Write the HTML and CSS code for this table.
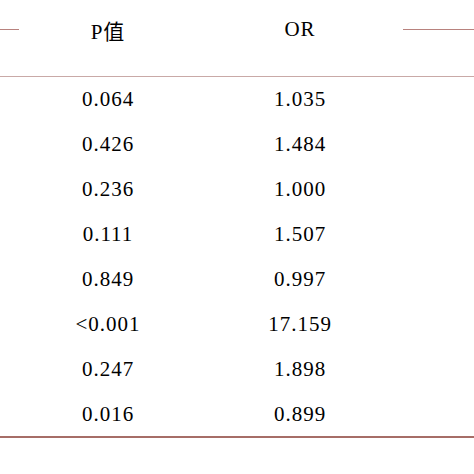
FILE: index.html
```html
<!DOCTYPE html>
<html lang="zh">
<head>
  <meta charset="UTF-8" />
  <title>P值 OR</title>
  <link rel="stylesheet" href="styles.css">
</head>
<body>
<div class="table">
  <div class="head">
    <div class="rule-left"></div>
    <div class="cell">P值</div>
    <div class="cell">OR</div>
    <div class="rule-right"></div>
  </div>
  <div class="body">
    <div class="row"><div class="cell">0.064</div><div class="cell">1.035</div></div>
    <div class="row"><div class="cell">0.426</div><div class="cell">1.484</div></div>
    <div class="row"><div class="cell">0.236</div><div class="cell">1.000</div></div>
    <div class="row"><div class="cell">0.111</div><div class="cell">1.507</div></div>
    <div class="row"><div class="cell">0.849</div><div class="cell">0.997</div></div>
    <div class="row"><div class="cell">&lt;0.001</div><div class="cell">17.159</div></div>
    <div class="row"><div class="cell">0.247</div><div class="cell">1.898</div></div>
    <div class="row last"><div class="cell">0.016</div><div class="cell">0.899</div></div>
  </div>
</div>
</body>
</html>
```

FILE: styles.css
```css
* { box-sizing: border-box; }
body {
  margin: 0;
  background: #fff;
  color: #000;
  font-family: "Liberation Serif", "Noto Sans CJK SC", serif;
  font-size: 21px;
  letter-spacing: 1px;
}
.table {
  width: 474px;
}
.head {
  display: grid;
  grid-template-columns: 19px 178px 206px 1fr;
  align-items: center;
  height: 77px;
  padding-bottom: 17px;
  border-bottom: 1px solid #c9a9a7;
}
.rule-left, .rule-right {
  height: 1px;
  background: #b8827e;
}
.head .cell { text-align: center; }
.body {
  border-bottom: 2px solid #a66d67;
}
.row {
  display: grid;
  grid-template-columns: 216px 168px;
  align-items: center;
  height: 45px;
}
.row.last { height: 44px; }
.row .cell { text-align: center; }
```
